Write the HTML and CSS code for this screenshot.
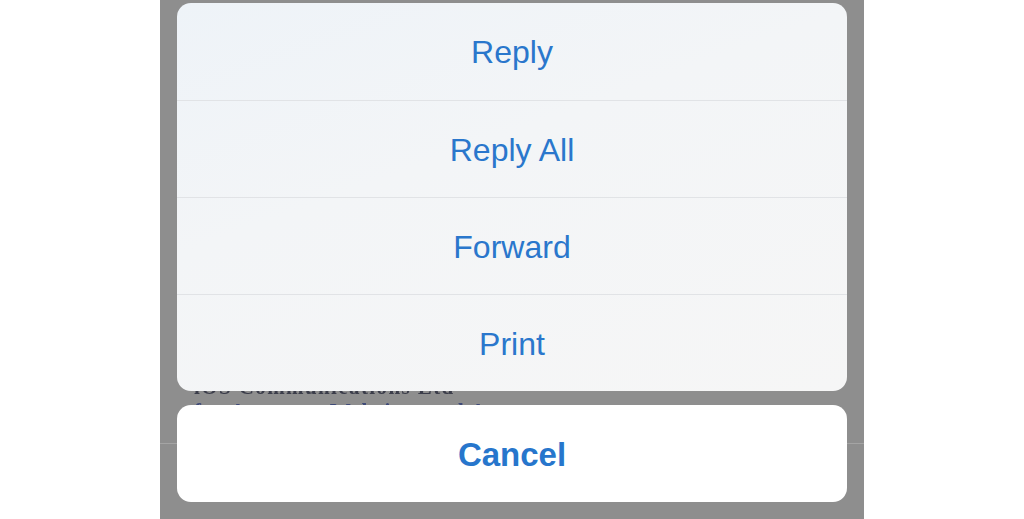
FILE: index.html
```html
<!DOCTYPE html>
<html>
<head>
<meta charset="utf-8">
<link rel="stylesheet" href="styles.css">
</head>
<body>
<div class="screen">
  <div class="behind">
    <div class="behind-line1">iOS Communications Ltd</div>
    <div class="behind-line2">for Awesome Websites and Apps</div>
    <div class="behind-rule"></div>
  </div>
  <div class="sheet">
    <div class="group">
      <div class="action">Reply</div>
      <div class="action">Reply All</div>
      <div class="action">Forward</div>
      <div class="action">Print</div>
    </div>
    <div class="cancel">Cancel</div>
  </div>
</div>
</body>
</html>
```

FILE: styles.css
```css
html, body {
  margin: 0;
  padding: 0;
  background: #ffffff;
}
body {
  display: flex;
  justify-content: center;
  height: 519px;
  overflow: hidden;
}
.screen {
  position: relative;
  width: 704px;
  height: 519px;
  background: #8e8e8e;
  overflow: hidden;
}
.behind {
  position: absolute;
  inset: 0;
  filter: blur(0.6px);
}
.behind-line1 {
  position: absolute;
  left: 34px;
  top: 378px;
  line-height: 18px;
  font-family: "Liberation Serif", serif;
  font-weight: bold;
  font-size: 21px;
  letter-spacing: 1.4px;
  color: #3b3d4a;
}
.behind-line2 {
  position: absolute;
  left: 34px;
  top: 402px;
  line-height: 18px;
  font-family: "Liberation Serif", serif;
  font-weight: bold;
  font-size: 21px;
  letter-spacing: 1.4px;
  color: #3e4a78;
}
.behind-rule {
  position: absolute;
  left: 0;
  right: 0;
  top: 443px;
  height: 1px;
  background: #a4a4a4;
}
.sheet {
  position: absolute;
  left: 17px;
  right: 17px;
  top: 3px;
  display: flex;
  flex-direction: column;
  gap: 14px;
}
.group {
  background: linear-gradient(160deg, #eef3f8 0%, #f3f5f7 40%, #f6f6f6 100%);
  border-radius: 14px;
  overflow: hidden;
  display: flex;
  flex-direction: column;
}
.action {
  height: 97px;
  padding-top: 2px;
  display: flex;
  align-items: center;
  justify-content: center;
  font-family: "Liberation Sans", Arial, sans-serif;
  font-size: 32px;
  color: #2a77cc;
  border-top: 1px solid #e1e3e6;
  box-sizing: border-box;
}
.action:first-child {
  border-top: none;
}
.cancel {
  height: 97px;
  padding-top: 3px;
  box-sizing: border-box;
  background: #ffffff;
  border-radius: 14px;
  display: flex;
  align-items: center;
  justify-content: center;
  font-family: "Liberation Sans", Arial, sans-serif;
  font-weight: bold;
  font-size: 33px;
  color: #2776cc;
}
```
